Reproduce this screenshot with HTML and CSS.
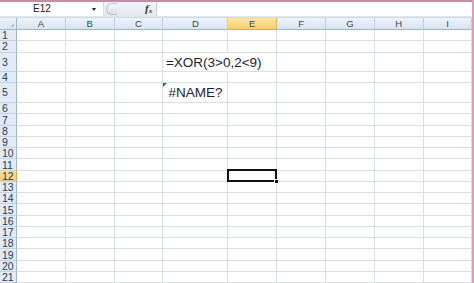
FILE: index.html
```html
<!DOCTYPE html>
<html>
<head>
<meta charset="utf-8">
<link rel="stylesheet" href="styles.css">
</head>
<body>
<div class="win">
  <div class="topband"></div>
  <div class="fbar">
    <div class="namebox"><span class="nb-text">E12</span><span class="nb-arrow"></span></div>
    <div class="fxzone"><span class="grip"></span><span class="fx"><i>f</i><sub>x</sub></span></div>
    <div class="finput"></div>
  </div>
  <div class="sep"></div>
  <div class="sheet">
    <div class="corner"><span class="tri"></span></div>
    <div class="ch">A</div><div class="ch">B</div><div class="ch">C</div><div class="ch">D</div><div class="ch sel">E</div><div class="ch">F</div><div class="ch">G</div><div class="ch">H</div><div class="ch">I</div>

    <div class="rh">1</div><div class="c"></div><div class="c"></div><div class="c"></div><div class="c"></div><div class="c"></div><div class="c"></div><div class="c"></div><div class="c"></div><div class="c"></div>
    <div class="rh">2</div><div class="c"></div><div class="c"></div><div class="c"></div><div class="c"></div><div class="c"></div><div class="c"></div><div class="c"></div><div class="c"></div><div class="c"></div>
    <div class="rh">3</div><div class="c"></div><div class="c"></div><div class="c"></div><div class="c txt over"><span>=XOR(3&gt;0,2&lt;9)</span></div><div class="c"></div><div class="c"></div><div class="c"></div><div class="c"></div><div class="c"></div>
    <div class="rh">4</div><div class="c"></div><div class="c"></div><div class="c"></div><div class="c"></div><div class="c"></div><div class="c"></div><div class="c"></div><div class="c"></div><div class="c"></div>
    <div class="rh">5</div><div class="c"></div><div class="c"></div><div class="c"></div><div class="c txt err"><span class="flag"></span><span>#NAME?</span></div><div class="c"></div><div class="c"></div><div class="c"></div><div class="c"></div><div class="c"></div>
    <div class="rh">6</div><div class="c"></div><div class="c"></div><div class="c"></div><div class="c"></div><div class="c"></div><div class="c"></div><div class="c"></div><div class="c"></div><div class="c"></div>
    <div class="rh">7</div><div class="c"></div><div class="c"></div><div class="c"></div><div class="c"></div><div class="c"></div><div class="c"></div><div class="c"></div><div class="c"></div><div class="c"></div>
    <div class="rh">8</div><div class="c"></div><div class="c"></div><div class="c"></div><div class="c"></div><div class="c"></div><div class="c"></div><div class="c"></div><div class="c"></div><div class="c"></div>
    <div class="rh">9</div><div class="c"></div><div class="c"></div><div class="c"></div><div class="c"></div><div class="c"></div><div class="c"></div><div class="c"></div><div class="c"></div><div class="c"></div>
    <div class="rh">10</div><div class="c"></div><div class="c"></div><div class="c"></div><div class="c"></div><div class="c"></div><div class="c"></div><div class="c"></div><div class="c"></div><div class="c"></div>
    <div class="rh">11</div><div class="c"></div><div class="c"></div><div class="c"></div><div class="c"></div><div class="c"></div><div class="c"></div><div class="c"></div><div class="c"></div><div class="c"></div>
    <div class="rh sel">12</div><div class="c"></div><div class="c"></div><div class="c"></div><div class="c"></div><div class="c active"><span class="handle"></span></div><div class="c"></div><div class="c"></div><div class="c"></div><div class="c"></div>
    <div class="rh">13</div><div class="c"></div><div class="c"></div><div class="c"></div><div class="c"></div><div class="c"></div><div class="c"></div><div class="c"></div><div class="c"></div><div class="c"></div>
    <div class="rh">14</div><div class="c"></div><div class="c"></div><div class="c"></div><div class="c"></div><div class="c"></div><div class="c"></div><div class="c"></div><div class="c"></div><div class="c"></div>
    <div class="rh">15</div><div class="c"></div><div class="c"></div><div class="c"></div><div class="c"></div><div class="c"></div><div class="c"></div><div class="c"></div><div class="c"></div><div class="c"></div>
    <div class="rh">16</div><div class="c"></div><div class="c"></div><div class="c"></div><div class="c"></div><div class="c"></div><div class="c"></div><div class="c"></div><div class="c"></div><div class="c"></div>
    <div class="rh">17</div><div class="c"></div><div class="c"></div><div class="c"></div><div class="c"></div><div class="c"></div><div class="c"></div><div class="c"></div><div class="c"></div><div class="c"></div>
    <div class="rh">18</div><div class="c"></div><div class="c"></div><div class="c"></div><div class="c"></div><div class="c"></div><div class="c"></div><div class="c"></div><div class="c"></div><div class="c"></div>
    <div class="rh">19</div><div class="c"></div><div class="c"></div><div class="c"></div><div class="c"></div><div class="c"></div><div class="c"></div><div class="c"></div><div class="c"></div><div class="c"></div>
    <div class="rh">20</div><div class="c"></div><div class="c"></div><div class="c"></div><div class="c"></div><div class="c"></div><div class="c"></div><div class="c"></div><div class="c"></div><div class="c"></div>
    <div class="rh">21</div><div class="c"></div><div class="c"></div><div class="c"></div><div class="c"></div><div class="c"></div><div class="c"></div><div class="c"></div><div class="c"></div><div class="c"></div>
  </div>
</div>
</body>
</html>
```

FILE: styles.css
```css
* { box-sizing: border-box; }
html, body { margin: 0; padding: 0; }
body {
  width: 474px;
  height: 283px;
  overflow: hidden;
  background: #d7a2b6;
  font-family: "Liberation Sans", Arial, sans-serif;
}
.win {
  width: 472.4px;
  height: 283px;
  overflow: hidden;
  background: #ffffff;
}
.topband {
  height: 2px;
  background: #c98aa5;
}
.fbar {
  height: 14px;
  display: flex;
  background: #fdfdfe;
}
.namebox {
  width: 103px;
  display: flex;
  align-items: center;
  background: #ffffff;
  position: relative;
}
.nb-text {
  width: 84px;
  text-align: center;
  font-size: 10px;
  color: #1c1c2c;
  line-height: 14px;
}
.nb-arrow {
  margin-left: 8px;
  width: 0;
  height: 0;
  border-left: 2.5px solid transparent;
  border-right: 2.5px solid transparent;
  border-top: 3px solid #222;
}
.fxzone {
  width: 54px;
  display: flex;
  align-items: center;
  background: linear-gradient(#f1f4f8, #e3e9f1);
  border-left: 1px solid #d6dde6;
  border-right: 1px solid #c8d0db;
}
.grip {
  margin-left: 2px;
  width: 11px;
  height: 12px;
  border-radius: 6px 0 0 6px;
  border: 1px solid #b9c2ce;
  border-right: none;
  background: linear-gradient(#f7f9fb, #d8dfe8);
}
.fx {
  margin-left: 28px;
  font-family: "Liberation Serif", "Times New Roman", serif;
  font-weight: bold;
  font-size: 11px;
  color: #333;
  line-height: 10px;
}
.fx i { font-style: italic; }
.fx sub { font-size: 7px; font-style: italic; vertical-align: -1px; }
.finput {
  flex: 1;
  background: #ffffff;
}
.sep {
  height: 2px;
  background: linear-gradient(#e9edf2, #c9d2dd);
}
.sheet {
  display: grid;
  grid-template-columns: 17px 48.8px 48.8px 48.8px 65px 48.8px 48.8px 48.8px 48.8px 48.8px;
  grid-template-rows: 12px 11.25px 11.25px 19px 11.25px 20.45px repeat(16, 11.25px);
}
.corner {
  background: linear-gradient(#eef2f8, #dbe4ef);
  border-right: 1px solid #9fb5cd;
  border-bottom: 1px solid #9fb5cd;
  position: relative;
}
.tri {
  position: absolute;
  right: 2px;
  bottom: 2px;
  width: 0;
  height: 0;
  border-left: 4px solid transparent;
  border-bottom: 4px solid #b9c5d3;
}
.ch {
  background: linear-gradient(#eef3f9, #d9e4f1);
  border-right: 1px solid #c0cfdf;
  border-bottom: 1px solid #9fb5cd;
  font-size: 9.5px;
  color: #2f4566;
  text-align: center;
  line-height: 11px;
}
.ch.sel {
  background: linear-gradient(#fbe7a6, #f7cf6b);
  border-bottom-color: #e3a545;
  border-right-color: #e3b55e;
}
.rh {
  background: #e2eaf5;
  border-right: 1px solid #9fb5cd;
  border-bottom: 1px solid #c3d1e2;
  font-size: 10.5px;
  color: #263a5c;
  padding-left: 2px;
  display: flex;
  align-items: center;
  line-height: 10px;
}
.rh.sel {
  background: linear-gradient(#fbe3a0, #f6ca62);
  border-right-color: #e3a545;
}
.c {
  border-right: 1px solid #dadee5;
  border-bottom: 1px solid #dadee5;
  position: relative;
}
.txt {
  font-size: 13.5px;
  color: #1d1d3a;
  white-space: nowrap;
  display: flex;
  align-items: center;
  overflow: visible;
  z-index: 2;
}
.over {
  padding-left: 2.5px;
  border-right-color: transparent;
  padding-top: 1px;
}
.err {
  justify-content: center;
  padding-top: 1px;
}
.flag {
  position: absolute;
  left: 0;
  top: 0;
  width: 0;
  height: 0;
  border-top: 4px solid #207a3c;
  border-right: 4px solid transparent;
}
.active {
  z-index: 3;
}
.active::before {
  content: "";
  position: absolute;
  left: -1.5px;
  top: -1.5px;
  right: -1px;
  bottom: -1px;
  border: 2px solid #111;
}
.handle {
  position: absolute;
  right: -3px;
  bottom: -3px;
  width: 5px;
  height: 5px;
  background: #111;
  border: 1px solid #fff;
  z-index: 4;
}
```
